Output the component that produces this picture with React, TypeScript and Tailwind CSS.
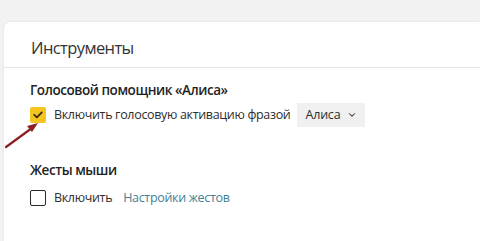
import { ChevronDown } from "lucide-react";

function Checkbox({ checked }: { checked?: boolean }) {
  if (checked) {
    return (
      <span className="flex h-[16px] w-[16px] items-center justify-center rounded-[2px] bg-[#f3c51d]">
        <svg width="10" height="8" viewBox="0 0 10 8" fill="none">
          <path d="M1.2 3.8 L3.9 6.4 L8.8 1.4" stroke="#3a2a10" strokeWidth="1.8" strokeLinecap="round" strokeLinejoin="round" />
        </svg>
      </span>
    );
  }
  return <span className="block h-[16px] w-[16px] rounded-[2px] border-[1.5px] border-[#2a2a2a] bg-white" />;
}

export default function App() {
  return (
    <div
      className="relative h-[241px] w-[480px] overflow-hidden bg-[#f2f2f2] pl-[4px] pt-[22px] text-[#2b2b2b]"
      style={{ fontFamily: '"Open Sans", "Noto Sans", sans-serif' }}
    >
      <div className="h-full rounded-tl-[6px] bg-white shadow-[0_0_3px_rgba(0,0,0,0.08)]">
        {/* Header */}
        <header className="flex h-[46px] items-end border-b border-[#e6e6e6] pb-[11px] pl-[27px]">
          <h1 className="text-[16.5px] font-normal leading-none tracking-[-0.6px] text-[#333]">Инструменты</h1>
        </header>

        {/* Alice */}
        <section className="pl-[26px] pt-[13px]">
          <h2 className="text-[13.5px] font-semibold leading-[18px] tracking-[-0.45px] text-[#1f1f1f]">Голосовой помощник «Алиса»</h2>
          <div className="mt-[4px] flex items-center">
            <Checkbox checked />
            <span className="ml-[8px] text-[12.5px] tracking-[-0.33px] text-[#2e2e2e]">Включить голосовую активацию фразой</span>
            <button className="ml-[7px] flex h-[24px] items-center gap-[7px] bg-[#f0f0f0] pl-[8px] pr-[8px] text-[12.5px] tracking-[-0.2px] text-[#2e2e2e]">
              Алиса
              <ChevronDown className="h-[10px] w-[10px]" strokeWidth={2.5} />
            </button>
          </div>
        </section>

        {/* Mouse gestures */}
        <section className="pl-[26px] pt-[34px]">
          <h2 className="text-[13.5px] font-semibold leading-[18px] tracking-[-0.45px] text-[#1f1f1f]">Жесты мыши</h2>
          <div className="mt-[10px] flex items-center">
            <Checkbox />
            <span className="ml-[8px] text-[12.5px] tracking-[-0.33px] text-[#2e2e2e]">Включить</span>
            <a className="ml-[11px] text-[12.5px] tracking-[-0.33px] text-[#3f7f96]">Настройки жестов</a>
          </div>
        </section>
      </div>

      {/* Annotation arrow */}
      <svg className="absolute left-0 top-0" width="60" height="160" viewBox="0 0 60 160">
        <line x1="6" y1="147" x2="32" y2="128" stroke="#8e1f24" strokeWidth="2.2" strokeLinecap="round" />
        <path d="M38 123 L27 126 L32 132 Z" fill="#8e1f24" />
      </svg>
    </div>
  );
}
